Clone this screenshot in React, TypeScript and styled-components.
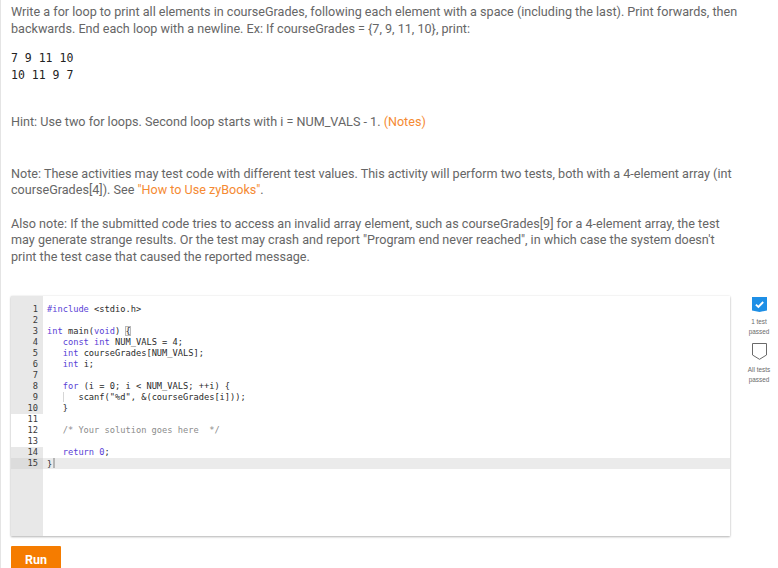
import React from "react";
import styled, { createGlobalStyle, css } from "styled-components";

const GlobalStyle = createGlobalStyle`
  html, body { margin: 0; padding: 0; background: #ffffff; }
  body { font-family: Roboto, "Liberation Sans", Arial, sans-serif; }
  * { box-sizing: border-box; }
`;

const Page = styled.div`
  min-height: 568px;
  border-left: 1px solid #e4e4e4;
  padding: 4px 0 0 10px;
  overflow: hidden;
`;

const Prose = styled.p<{ $top?: number }>`
  width: 730px;
  margin: ${(p) => p.$top ?? 0}px 0 0;
  font-size: 12.6px;
  line-height: 16.5px;
  font-weight: 400;
  color: #666666;
`;

const Link = styled.span`
  color: #f58a32;
`;

const Output = styled.pre<{ $top?: number }>`
  margin: ${(p) => p.$top ?? 0}px 0 0;
  font-family: "DejaVu Sans Mono", "Liberation Mono", monospace;
  font-size: 11.5px;
  line-height: 17px;
  color: #222;
`;

const EditorRow = styled.div`
  display: flex;
  align-items: flex-start;
  margin-top: 31px;
`;

const Editor = styled.div`
  width: 720px;
  height: 240px;
  display: flex;
  background: #fff;
  box-shadow: 0 1px 2px rgba(0, 0, 0, 0.28), 0 0 2px rgba(0, 0, 0, 0.08);
  font-family: "DejaVu Sans Mono", "Liberation Mono", monospace;
  font-size: 8.7px;
  overflow: hidden;
`;

const Gutter = styled.div`
  width: 32px;
  display: flex;
  flex-direction: column;
  flex-shrink: 0;
`;

type GutterKind = "ro" | "rw" | "active";

const GutterCell = styled.div<{ $kind: GutterKind }>`
  height: 11px;
  line-height: 11px;
  text-align: right;
  padding-right: 5px;
  color: #3a3a3a;
  background: ${(p) =>
    p.$kind === "rw" ? "#ffffff" : p.$kind === "active" ? "#dcdcdc" : "#e8e8e8"};
`;

const GutterPad = styled.div<{ $grow?: boolean }>`
  background: #e8e8e8;
  ${(p) => (p.$grow ? css`flex: 1;` : css`height: 8px; flex-shrink: 0;`)}
`;

const Code = styled.div`
  flex: 1;
  padding-top: 8px;
  display: flex;
  flex-direction: column;
`;

const CodeLine = styled.div<{ $active?: boolean }>`
  height: 11px;
  line-height: 11px;
  padding-left: 4px;
  white-space: pre;
  color: #2b2b2b;
  background: ${(p) => (p.$active ? "#ebebeb" : "transparent")};
`;

type TokKind = "" | "kw" | "cm" | "num" | "match" | "guide" | "cursor";

const Token = styled.span<{ $kind: TokKind }>`
  ${(p) => {
    switch (p.$kind) {
      case "kw":
        return css`color: #5a3fd6;`;
      case "num":
        return css`color: #5a3fd6;`;
      case "cm":
        return css`color: #8c8c8c;`;
      case "match":
        return css`outline: 1px solid #b9b9b9; outline-offset: -1px; background: #f4f4f4;`;
      case "guide":
        return css`box-shadow: inset 1px 0 0 #d6d6d6;`;
      case "cursor":
        return css`display: inline-block; width: 2px; height: 10px; margin-left: 1px; vertical-align: -1px; background: #b5b5b5;`;
      default:
        return css``;
    }
  }}
`;

const Side = styled.div`
  width: 38px;
  margin-left: 10px;
  display: flex;
  flex-direction: column;
  align-items: center;
  padding-top: 1px;
`;

const Badge = styled.svg<{ $top?: number }>`
  display: block;
  margin-top: ${(p) => p.$top ?? 0}px;
`;

const BadgeLabel = styled.div`
  margin-top: 5px;
  font-family: "Liberation Sans", Arial, sans-serif;
  font-size: 6.4px;
  line-height: 10px;
  color: #6b6b6b;
  text-align: center;
  white-space: nowrap;
`;

const RunButton = styled.button`
  margin-top: 10px;
  width: 50px;
  height: 27px;
  border: none;
  border-radius: 1px;
  background: #f57c00;
  color: #fff;
  font-family: Roboto, "Liberation Sans", Arial, sans-serif;
  font-weight: 700;
  font-size: 12.5px;
  padding: 0;
  display: flex;
  align-items: center;
  justify-content: center;
`;

type Tok = [TokKind, string];

const code: { ro: GutterKind; toks: Tok[] }[] = [
  { ro: "ro", toks: [["kw", "#include"], ["", " <stdio.h>"]] },
  { ro: "ro", toks: [] },
  { ro: "ro", toks: [["kw", "int"], ["", " main("], ["kw", "void"], ["", ") "], ["match", "{"]] },
  { ro: "ro", toks: [["", "   "], ["kw", "const"], ["", " "], ["kw", "int"], ["", " NUM_VALS = 4;"]] },
  { ro: "ro", toks: [["", "   "], ["kw", "int"], ["", " courseGrades[NUM_VALS];"]] },
  { ro: "ro", toks: [["", "   "], ["kw", "int"], ["", " i;"]] },
  { ro: "ro", toks: [] },
  { ro: "ro", toks: [["", "   "], ["kw", "for"], ["", " (i = 0; i < NUM_VALS; ++i) {"]] },
  { ro: "ro", toks: [["", "   "], ["guide", "   "], ["", "scanf(\"%d\", &(courseGrades[i]));"]] },
  { ro: "ro", toks: [["", "   }"]] },
  { ro: "rw", toks: [] },
  { ro: "rw", toks: [["", "   "], ["cm", "/* Your solution goes here  */"]] },
  { ro: "rw", toks: [] },
  { ro: "ro", toks: [["", "   "], ["kw", "return"], ["", " "], ["num", "0"], ["", ";"]] },
  { ro: "active", toks: [["", "}"], ["cursor", ""]] },
];

const intro =
  "Write a for loop to print all elements in courseGrades, following each element with a space (including the last). Print forwards, then backwards. End each loop with a newline. Ex: If courseGrades = {7, 9, 11, 10}, print:";
const hint = "Hint: Use two for loops. Second loop starts with i = NUM_VALS - 1. ";
const note =
  "Note: These activities may test code with different test values. This activity will perform two tests, both with a 4-element array (int courseGrades[4]). See ";
const alsoNote =
  "Also note: If the submitted code tries to access an invalid array element, such as courseGrades[9] for a 4-element array, the test may generate strange results. Or the test may crash and report \"Program end never reached\", in which case the system doesn't print the test case that caused the reported message.";

export default function App() {
  return (
    <>
      <GlobalStyle />
      <Page>
        <Prose>{intro}</Prose>
        <Output $top={13}>{"7 9 11 10\n10 11 9 7"}</Output>
        <Prose $top={30}>
          {hint}
          <Link>(Notes)</Link>
        </Prose>
        <Prose $top={35}>
          {note}
          <Link>"How to Use zyBooks"</Link>
          {"."}
        </Prose>
        <Prose $top={17}>{alsoNote}</Prose>
        <EditorRow>
          <Editor>
            <Gutter>
              <GutterPad />
              {code.map((l, i) => (
                <GutterCell key={i} $kind={l.ro}>
                  {i + 1}
                </GutterCell>
              ))}
              <GutterPad $grow />
            </Gutter>
            <Code>
              {code.map((l, i) => (
                <CodeLine key={i} $active={l.ro === "active"}>
                  {l.toks.map(([k, t], j) => (
                    <Token key={j} $kind={k}>
                      {t}
                    </Token>
                  ))}
                </CodeLine>
              ))}
            </Code>
          </Editor>
          <Side>
            <Badge width="15" height="15" viewBox="0 0 15 15">
              <path d="M0 0 H15 V13.4 L7.5 15 L0 13.4 Z" fill="#1e8fe6" />
              <path d="M3.9 7.6 L6.4 10 L11.2 5" fill="none" stroke="#fff" strokeWidth="1.9" />
            </Badge>
            <BadgeLabel>
              1 test
              <br />
              passed
            </BadgeLabel>
            <Badge $top={6} width="15" height="17" viewBox="0 0 15 17">
              <path
                d="M0.5 0.5 H14.5 V12 L7.5 16.3 L0.5 12 Z"
                fill="#fff"
                stroke="#6a6a6a"
                strokeWidth="1"
              />
            </Badge>
            <BadgeLabel>
              All tests
              <br />
              passed
            </BadgeLabel>
          </Side>
        </EditorRow>
        <RunButton>Run</RunButton>
      </Page>
    </>
  );
}
